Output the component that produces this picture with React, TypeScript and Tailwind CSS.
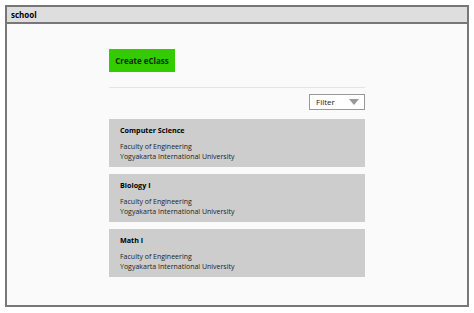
const classes = [
  { name: 'Computer Science', faculty: 'Faculty of Engineering', university: 'Yogyakarta International University' },
  { name: 'Biology I', faculty: 'Faculty of Engineering', university: 'Yogyakarta International University' },
  { name: 'Math I', faculty: 'Faculty of Engineering', university: 'Yogyakarta International University' },
];

export default function App() {
  return (
    <div
      className="h-[313px] w-[474px] bg-white p-[5px]"
      style={{ fontFamily: '"Open Sans", "Noto Sans", sans-serif' }}
    >
      <div className="flex h-[302px] flex-col border-2 border-[#777777] bg-[#fafafa]">
        <div className="flex h-[17px] items-center border-b-2 border-[#777777] bg-[#dedede] px-[4px] text-[8px] font-bold text-black">
          school
        </div>
        <div className="flex flex-col px-[102px] pt-[25px]">
          <button className="flex h-[23px] w-[66px] items-center justify-center bg-[#33cc00] text-[8px] font-bold text-[#0b2a00]">
            Create eClass
          </button>
          <div className="mt-[15px] h-px bg-[#e2e2f0]" />
          <div className="mt-[6px] flex justify-end">
            <div className="flex h-[16px] w-[56px] items-center justify-between border border-[#999999] bg-white pl-[6px] pr-[5px] text-[8px] text-[#222]">
              <span>Filter</span>
              <svg width="10" height="6" viewBox="0 0 10 6">
                <path d="M0 0 H10 L5 6 Z" fill="#999999" />
              </svg>
            </div>
          </div>
          <div className="mt-[9px] flex flex-col gap-[7px]">
            {classes.map((c) => (
              <div key={c.name} className="flex h-[48px] flex-col bg-[#cdcdcd] px-[11px] pt-[6px] text-[#222]">
                <div className="text-[7.2px] font-bold leading-[10px] text-black">{c.name}</div>
                <div className="mt-[7px] text-[7px] leading-[10px]">{c.faculty}</div>
                <div className="text-[7px] leading-[10px]">{c.university}</div>
              </div>
            ))}
          </div>
        </div>
      </div>
    </div>
  );
}
